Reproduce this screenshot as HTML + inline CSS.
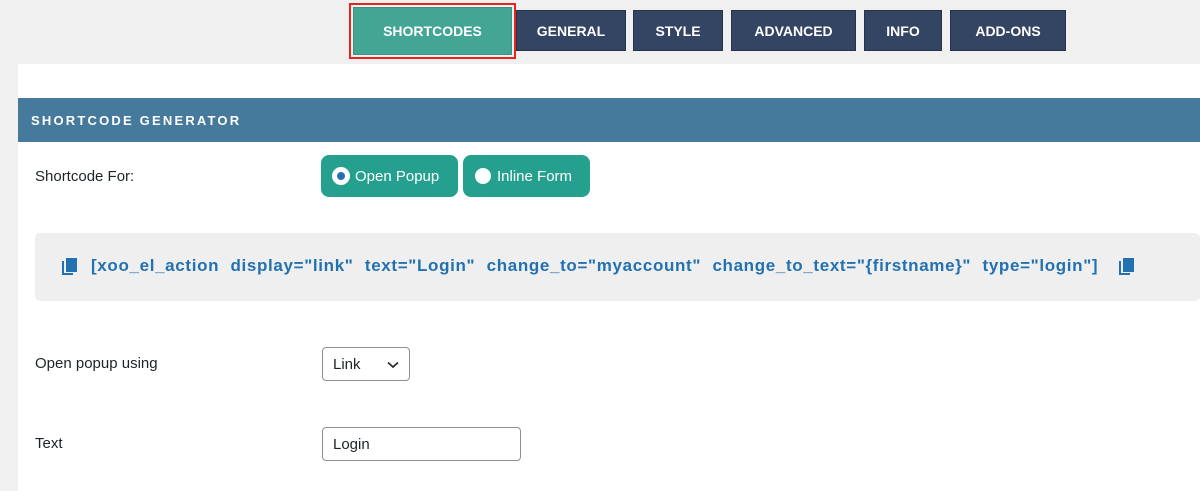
<!DOCTYPE html>
<html><head><style>
*{box-sizing:border-box;margin:0;padding:0}
body{width:1200px;height:491px;background:#f0f0f1;font-family:"Liberation Sans",sans-serif;position:relative;overflow:hidden;color:#1d2327}
.a{position:absolute}
.tab{position:absolute;top:10px;height:41px;background:#344563;color:#fff;font-weight:bold;font-size:14px;display:flex;align-items:center;justify-content:center;border:1px solid #26334a}
.lbl{position:absolute;left:35px;font-size:15px}
.rb{position:absolute;top:155px;height:42px;background:#26a08e;border-radius:8px;color:#fff;font-size:15px;display:flex;align-items:center;padding-left:12px}
.rb i{display:inline-block;width:16px;height:16px;border-radius:50%;background:#fff;margin-right:6px}
</style></head><body>
<div class="a" style="left:18px;top:64px;width:1182px;height:427px;background:#fff"></div>
<div class="a" style="left:349px;top:3px;width:167px;height:56px;border:2px solid #e8241f"></div>
<div class="tab" style="left:353px;top:7px;width:159px;height:48px;background:#43a594;border-color:#3a9584">SHORTCODES</div>
<div class="tab" style="left:516px;width:110px">GENERAL</div>
<div class="tab" style="left:633px;width:90px">STYLE</div>
<div class="tab" style="left:731px;width:125px">ADVANCED</div>
<div class="tab" style="left:864px;width:78px">INFO</div>
<div class="tab" style="left:950px;width:116px">ADD-ONS</div>
<div class="a" style="left:18px;top:98px;width:1182px;height:44px;background:#457a9c;color:#fff;font-weight:bold;font-size:13px;letter-spacing:2.2px;padding:15px 0 0 13px">SHORTCODE GENERATOR</div>
<div class="lbl" style="top:168px">Shortcode For:</div>
<div class="rb" style="left:321px;width:137px"><i style="border:4px solid #fff;background:#2271b1;box-shadow:0 0 0 1px #fff"></i>Open Popup</div>
<div class="rb" style="left:463px;width:127px"><i></i>Inline Form</div>
<div class="a" style="left:35px;top:233px;width:1165px;height:68px;background:#efefef;border-radius:5px"></div>
<div class="a" style="left:62px;top:258px;width:15px;height:17px">
<div class="a" style="left:0;top:3px;width:11px;height:14px;border-left:2px solid #2271b1;border-bottom:2px solid #2271b1"></div>
<div class="a" style="left:4px;top:0;width:11px;height:14px;background:#2271b1"></div></div>
<div class="a" style="left:91px;top:256px;font-size:17px;font-weight:bold;letter-spacing:0.65px;color:#2271b1;word-spacing:6px;white-space:nowrap">[xoo_el_action display="link" text="Login" change_to="myaccount" change_to_text="{firstname}" type="login"]</div>
<div class="a" style="left:1119px;top:258px;width:15px;height:17px">
<div class="a" style="left:0;top:3px;width:11px;height:14px;border-left:2px solid #2271b1;border-bottom:2px solid #2271b1"></div>
<div class="a" style="left:4px;top:0;width:11px;height:14px;background:#2271b1"></div></div>
<div class="lbl" style="top:355px">Open popup using</div>
<div class="a" style="left:322px;top:347px;width:88px;height:34px;border:1px solid #8c8f94;border-radius:4px;font-size:15px;padding:8px 0 0 10px">Link
<svg class="a" style="left:64px;top:13px" width="12" height="8" viewBox="0 0 12 8"><path d="M1 1.5L6 6 11 1.5" fill="none" stroke="#1d2327" stroke-width="1.6"/></svg></div>
<div class="lbl" style="top:435px">Text</div>
<div class="a" style="left:322px;top:427px;width:199px;height:34px;border:1px solid #8c8f94;border-radius:4px;font-size:15px;padding:8px 0 0 10px">Login</div>
</body></html>
